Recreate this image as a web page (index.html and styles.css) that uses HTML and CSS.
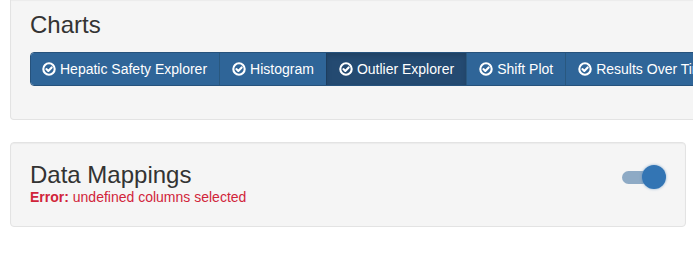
FILE: index.html
```html
<!DOCTYPE html>
<html>
<head>
<meta charset="utf-8">
<link rel="stylesheet" href="styles.css">
</head>
<body>
<div class="page">
  <section class="well well-charts">
    <h3 class="well-title">Charts</h3>
    <div class="btn-group">
      <button class="btn"><svg class="ico" viewBox="0 0 14 14"><circle cx="7" cy="7" r="5.7"/><path d="M4.4 7.1 L6.3 8.9 L9.7 5.4"/></svg>Hepatic Safety Explorer</button>
      <button class="btn"><svg class="ico" viewBox="0 0 14 14"><circle cx="7" cy="7" r="5.7"/><path d="M4.4 7.1 L6.3 8.9 L9.7 5.4"/></svg>Histogram</button>
      <button class="btn active"><svg class="ico" viewBox="0 0 14 14"><circle cx="7" cy="7" r="5.7"/><path d="M4.4 7.1 L6.3 8.9 L9.7 5.4"/></svg>Outlier Explorer</button>
      <button class="btn"><svg class="ico" viewBox="0 0 14 14"><circle cx="7" cy="7" r="5.7"/><path d="M4.4 7.1 L6.3 8.9 L9.7 5.4"/></svg>Shift Plot</button>
      <button class="btn"><svg class="ico" viewBox="0 0 14 14"><circle cx="7" cy="7" r="5.7"/><path d="M4.4 7.1 L6.3 8.9 L9.7 5.4"/></svg>Results Over Time</button>
    </div>
  </section>
  <section class="well well-mappings">
    <div class="mapping-text">
      <h3 class="mapping-title">Data Mappings</h3>
      <div class="error"><b>Error:</b> undefined columns selected</div>
    </div>
    <div class="switch"><span class="track"></span><span class="knob"></span></div>
  </section>
</div>
</body>
</html>
```
FILE: styles.css
```css
html, body {
  margin: 0;
  padding: 0;
  overflow: hidden;
  background: #ffffff;
}
body {
  font-family: "Liberation Sans", Arial, Helvetica, sans-serif;
  font-size: 14px;
  line-height: 20px;
  color: #333333;
  width: 693px;
  height: 270px;
}
.page {
  padding: 0 7px 0 10px;
}
.well {
  background: #f5f5f5;
  border: 1px solid #e3e3e3;
  border-radius: 4px;
  box-shadow: inset 0 1px 1px rgba(0,0,0,0.04);
  padding: 19px;
}
.well-charts {
  border-top: none;
  border-radius: 0 0 4px 4px;
  padding-top: 12px;
  padding-bottom: 19px;
  width: max-content;
  min-width: 100%;
}
.well-title {
  margin: 0;
  font-size: 24px;
  font-weight: normal;
  line-height: 26px;
  color: #333333;
}
.btn-group {
  display: flex;
  margin-top: 14px;
  margin-bottom: 14px;
  border-radius: 4px;
  overflow: hidden;
  border: 1px solid #26527c;
  width: max-content;
}
.btn {
  display: flex;
  align-items: center;
  font-family: inherit;
  font-size: 14px;
  line-height: 20px;
  padding: 6px 12px;
  margin: 0;
  border: none;
  border-left: 1px solid #29587f;
  background: #2f6598;
  color: #ffffff;
  height: 32px;
}
.btn:first-child {
  border-left: none;
  padding-left: 11px;
}
.btn.active {
  background: #244a71;
  border-left-color: #1d3d5e;
  box-shadow: inset 0 3px 5px rgba(0,0,0,0.125);
}
.ico {
  width: 14px;
  height: 14px;
  margin-right: 4px;
  fill: none;
  stroke: #ffffff;
  stroke-width: 2.1;
  stroke-linecap: round;
  stroke-linejoin: round;
}
.well-mappings {
  margin-top: 22px;
  display: flex;
  justify-content: space-between;
  align-items: flex-start;
}
.mapping-title {
  margin: 1px 0 0;
  font-size: 24px;
  font-weight: normal;
  line-height: 24px;
  color: #333333;
}
.error {
  color: #d1243a;
  font-size: 14px;
  line-height: 20px;
}
.error b {
  font-weight: bold;
}
.switch {
  display: flex;
  align-items: center;
  margin-top: 3px;
  width: 44px;
  height: 24px;
}
.track {
  width: 28px;
  height: 13px;
  border-radius: 7px;
  background: #8eaac5;
}
.knob {
  width: 24px;
  height: 24px;
  border-radius: 50%;
  background: #3375b4;
  margin-left: -7px;
  box-shadow: 0 0 2px 1px rgba(51,117,180,0.25);
}
```
